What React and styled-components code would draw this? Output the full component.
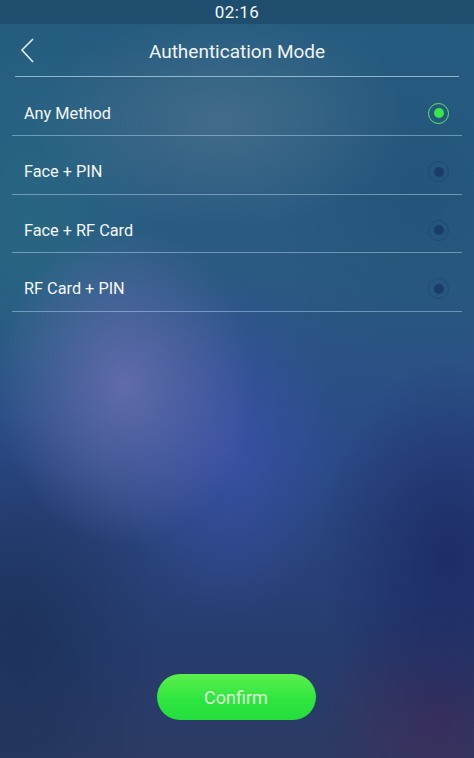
import React, { useState } from 'react';
import styled, { createGlobalStyle } from 'styled-components';

const GlobalStyle = createGlobalStyle`
   html, body {
      margin: 0;
      padding: 0;
      background: #1f3e66;
   }
   * {
      box-sizing: border-box;
   }
`;

const Screen = styled.div`
   width: 474px;
   height: 758px;
   display: flex;
   flex-direction: column;
   font-family: Roboto, "Noto Sans", sans-serif;
   color: #f2f6f8;
   overflow: hidden;
   background:
      radial-gradient(ellipse 130px 160px at 125px 385px, rgba(102, 110, 176, 0.9), rgba(102, 110, 176, 0) 100%),
      radial-gradient(ellipse 110px 170px at 230px 450px, rgba(60, 82, 170, 0.8), rgba(60, 82, 170, 0) 100%),
      radial-gradient(ellipse 190px 110px at 220px 120px, rgba(84, 118, 146, 0.6), rgba(84, 118, 146, 0) 100%),
      radial-gradient(ellipse 140px 220px at 20px 640px, rgba(28, 50, 90, 0.9), rgba(28, 50, 90, 0) 100%),
      radial-gradient(ellipse 130px 200px at 450px 560px, rgba(28, 42, 100, 0.9), rgba(28, 42, 100, 0) 100%),
      radial-gradient(ellipse 120px 120px at 440px 720px, rgba(62, 46, 90, 0.9), rgba(62, 46, 90, 0) 100%),
      radial-gradient(ellipse 150px 180px at 420px 200px, rgba(34, 84, 120, 0.8), rgba(34, 84, 120, 0) 100%),
      radial-gradient(ellipse 130px 210px at 30px 220px, rgba(40, 104, 130, 0.85), rgba(40, 104, 130, 0) 100%),
      linear-gradient(180deg, #245c7e 0%, #2a5a82 35%, #2b4a88 60%, #263c6e 85%, #2c3a64 100%);
`;

const StatusBar = styled.div`
   height: 24px;
   flex: none;
   display: flex;
   align-items: center;
   justify-content: center;
   background: rgba(14, 40, 64, 0.28);
   font-size: 17px;
   font-weight: 400;
   color: #f4f8fa;
   letter-spacing: 0.4px;
`;

const Header = styled.header`
   height: 53px;
   flex: none;
   margin: 0 15px;
   padding-top: 2px;
   display: flex;
   align-items: center;
   justify-content: center;
   position: relative;
   border-bottom: 1.5px solid rgba(190, 220, 235, 0.7);
`;

const BackButton = styled.button`
   position: absolute;
   left: 3px;
   top: 12px;
   width: 24px;
   height: 28px;
   padding: 0;
   border: none;
   background: transparent;
   cursor: pointer;
`;

const Title = styled.h1`
   margin: 0;
   font-size: 19px;
   font-weight: 400;
   color: #eef4f7;
`;

const List = styled.ul`
   list-style: none;
   margin: 0 12px;
   padding: 0;
`;

const Row = styled.li`
   height: 59px;
   padding: 14px 13px 0 12px;
   display: flex;
   align-items: center;
   justify-content: space-between;
   border-bottom: 1px solid rgba(170, 200, 225, 0.55);
   cursor: pointer;
   margin-top: ${p => (p.$first ? '0' : '-0.5px')};
`;

const Label = styled.span`
   font-size: 16.3px;
   color: #f3f7f9;
`;

const Radio = styled.span`
   width: 21px;
   height: 21px;
   border-radius: 50%;
   display: flex;
   align-items: center;
   justify-content: center;
   border: 1.5px solid ${p => (p.$on ? '#5ee86a' : 'rgba(20, 50, 90, 0.35)')};
   &::after {
      content: '';
      width: 10px;
      height: 10px;
      border-radius: 50%;
      background: ${p => (p.$on ? '#3ae646' : 'rgba(22, 52, 100, 0.75)')};
   }
`;

const Spacer = styled.div`
   flex: 1;
`;

const Footer = styled.div`
   display: flex;
   justify-content: center;
   padding-bottom: 38px;
   margin-left: -2px;
`;

const ConfirmButton = styled.button`
   width: 159px;
   height: 46px;
   border: none;
   border-radius: 23px;
   background: linear-gradient(180deg, #5cef4c 0%, #2fe640 55%, #24de3c 100%);
   color: #dcf8d4;
   font-family: Roboto, "Noto Sans", sans-serif;
   font-size: 18px;
   cursor: pointer;
`;

const modes = ['Any Method', 'Face + PIN', 'Face + RF Card', 'RF Card + PIN'];

export default function App() {
   const [selected, setSelected] = useState(0);

   return (
      <>
         <GlobalStyle />
         <Screen>
            <StatusBar>02:16</StatusBar>
            <Header>
               <BackButton aria-label="Back">
                  <svg width="24" height="28" viewBox="0 0 24 28">
                     <path d="M15 3 L4 14 L15 26" fill="none" stroke="#dff0f6" strokeWidth="1.6" />
                  </svg>
               </BackButton>
               <Title>Authentication Mode</Title>
            </Header>
            <List>
               {modes.map((mode, i) => (
                  <Row key={mode} $first={i === 0} onClick={() => setSelected(i)}>
                     <Label>{mode}</Label>
                     <Radio $on={selected === i} />
                  </Row>
               ))}
            </List>
            <Spacer />
            <Footer>
               <ConfirmButton>Confirm</ConfirmButton>
            </Footer>
         </Screen>
      </>
   );
}
